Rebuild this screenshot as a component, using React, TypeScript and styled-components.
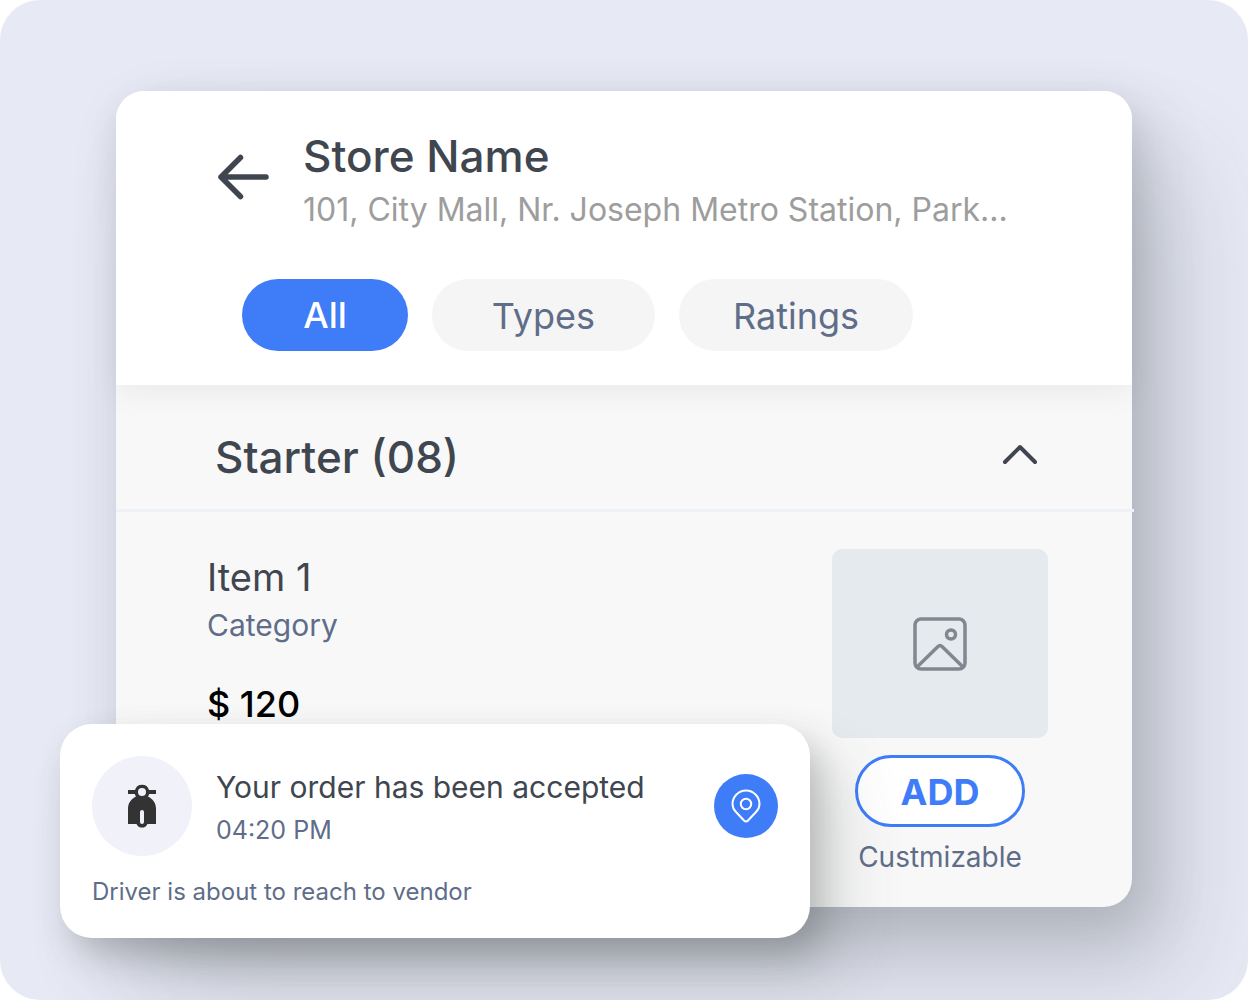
import React from "react";
import styled, { createGlobalStyle } from "styled-components";

const Global = createGlobalStyle`
  * { box-sizing: border-box; }
  body { margin: 0; background: #fff; font-family: Inter, "Liberation Sans", sans-serif; }
  button { font-family: inherit; border: 0; padding: 0; cursor: pointer; }
  h1, h2, h3, p { margin: 0; font-weight: 400; }
`;

const Stage = styled.main`
  padding: 91px 116px 93px;
  border-radius: 40px;
  background: #e7e9f5;
  overflow: hidden;
`;

const Card = styled.article`
  position: relative;
  border-radius: 28px;
  background: #f8f8f8;
  box-shadow:
    16px 24px 56px rgba(70, 76, 80, 0.22),
    52px 72px 100px rgba(70, 76, 80, 0.18);
`;

const Header = styled.header`
  padding: 39px 100px 34px;
  border-radius: 28px 28px 0 0;
  background: #fff;
  box-shadow: 0 8px 32px rgba(0, 0, 0, 0.06);
`;

const StoreRow = styled.div`
  display: flex;
  gap: 33px;
`;

const BackButton = styled.button`
  display: flex;
  align-items: center;
  justify-content: center;
  width: 54px;
  height: 94px;
  background: none;
  color: #40464f;
`;

const StoreName = styled.h1`
  font-size: 44px;
  line-height: 52px;
  font-weight: 500;
  color: #40464f;
`;

const Address = styled.p`
  font-size: 32px;
  line-height: 56px;
  color: #9d9d9d;
  white-space: nowrap;
`;

const Filters = styled.nav`
  display: flex;
  gap: 24px;
  margin: 41px 0 0 26px;
`;

const Pill = styled.button<{ $active?: boolean; $width: number }>`
  width: ${(p) => p.$width}px;
  height: 72px;
  padding-top: ${(p) => (p.$active ? 0 : 2)}px;
  border-radius: 36px;
  font-size: 36px;
  font-weight: ${(p) => (p.$active ? 500 : 400)};
  background: ${(p) => (p.$active ? "#3f7cf8" : "#f5f5f5")};
  color: ${(p) => (p.$active ? "#fff" : "#5f6d89")};
`;

const SectionHead = styled.div`
  display: flex;
  align-items: center;
  justify-content: space-between;
  height: 127px;
  margin-right: -2px;
  padding: 20px 96px 0 99px;
  border-bottom: 3px solid #eef1f5;
`;

const SectionTitle = styled.h2`
  font-size: 44px;
  line-height: 52px;
  font-weight: 500;
  color: #40464f;
`;

const IconButton = styled.button`
  display: flex;
  background: none;
  color: #40464f;
`;

const Item = styled.section`
  display: flex;
  justify-content: space-between;
  padding: 37px 84px 30px 91px;
`;

const ItemName = styled.h3`
  font-size: 38px;
  line-height: 56px;
  color: #40464f;
`;

const Category = styled.p`
  font-size: 30px;
  line-height: 40px;
  color: #5f6d89;
`;

const Price = styled.p`
  margin-top: 34px;
  font-size: 36px;
  line-height: 50px;
  font-weight: 500;
  color: #000;
`;

const ItemAside = styled.div`
  display: flex;
  flex-direction: column;
  align-items: center;
  width: 216px;
`;

const Thumb = styled.div`
  display: flex;
  align-items: center;
  justify-content: center;
  width: 100%;
  height: 189px;
  border-radius: 10px;
  background: #e5eaee;
`;

const AddButton = styled.button`
  width: 170px;
  height: 72px;
  margin-top: 17px;
  padding-top: 2px;
  border: 3px solid #3f7cf8;
  border-radius: 36px;
  background: #fff;
  color: #3f7cf8;
  font-size: 36px;
  font-weight: 700;
`;

const Note = styled.p`
  margin-top: 10px;
  font-size: 28px;
  line-height: 40px;
  color: #5f6d89;
`;

const Toast = styled.aside`
  position: absolute;
  left: -56px;
  bottom: -31px;
  width: 750px;
  padding: 32px 32px 30px;
  border-radius: 32px;
  background: #fff;
  box-shadow:
    10px 16px 32px rgba(70, 74, 74, 0.26),
    32px 40px 64px rgba(70, 74, 74, 0.16);
`;

const ToastRow = styled.div`
  display: flex;
  align-items: center;
`;

const Avatar = styled.div`
  display: flex;
  align-items: center;
  justify-content: center;
  width: 100px;
  height: 100px;
  border-radius: 50%;
  background: #f1f2f9;
`;

const ToastText = styled.div`
  flex: 1;
  padding: 4px 0 0 24px;
  white-space: nowrap;
`;

const ToastTitle = styled.p`
  font-size: 30px;
  line-height: 44px;
  color: #40464f;
`;

const Time = styled.p`
  font-size: 25px;
  line-height: 42px;
  color: #5f6d89;
`;

const LocateButton = styled.button`
  display: flex;
  align-items: center;
  justify-content: center;
  width: 64px;
  height: 64px;
  border-radius: 50%;
  background: #3f7cf8;
`;

const Status = styled.p`
  margin-top: 20px;
  font-size: 24px;
  line-height: 32px;
  color: #5f6d89;
`;

const ArrowIcon = () => (
  <svg width="54" height="48" viewBox="0 0 54 48" fill="none" stroke="currentColor" strokeWidth="5.5" strokeLinecap="round" strokeLinejoin="round">
    <path d="M50 24H5M24.500 4.500 5 24 24.500 43.500" />
  </svg>
);

const ChevronIcon = () => (
  <svg width="36" height="26" viewBox="0 0 36 26" fill="none" stroke="currentColor" strokeWidth="4" strokeLinecap="round" strokeLinejoin="round">
    <path d="M3 18 18 3 33 18" />
  </svg>
);

const ImageIcon = () => (
  <svg width="54" height="54" viewBox="0 0 54 54" fill="none" stroke="#82868f" strokeWidth="3.500" strokeLinejoin="round">
    <rect x="2" y="2" width="50" height="50" rx="6" />
    <circle cx="38" cy="17.500" r="4.500" />
    <path d="M4 50 25 29.500Q27 27.500 29 29.500L50 50" />
  </svg>
);

const ScooterIcon = () => (
  <svg width="28" height="44" viewBox="0 0 28 44" fill="#333">
    <path
      fillRule="evenodd"
      d="M0 6H7A7.300 7.300 0 0 1 21 6H28V10H21.200A7 7 0 0 1 20 12.500C25 15 28 19 28 25V40H19.500A6 6 0 0 1 8.500 40H0V25C0 19 3 15 8 12.500A7 7 0 0 1 6.800 10H0ZM14 4A4 4 0 1 0 14 12A4 4 0 1 0 14 4ZM12 28V38A2 2 0 0 0 16 38V28A2 2 0 0 0 12 28Z"
    />
  </svg>
);

const PinIcon = () => (
  <svg width="30" height="34" viewBox="0 0 30 34" fill="none" stroke="#fff" strokeWidth="2" strokeLinejoin="round">
    <path d="M17 31.500 25 23C27.500 20.500 28.500 18 28.500 15A13.500 13.500 0 0 0 1.500 15C1.500 18 2.500 20.500 5 23L13 31.500Q15 33.500 17 31.500Z" />
    <circle cx="15" cy="15" r="5.200" />
  </svg>
);

export default function App() {
  return (
    <>
      <Global />
      <Stage>
        <Card>
          <Header>
            <StoreRow>
              <BackButton aria-label="Back">
                <ArrowIcon />
              </BackButton>
              <div>
                <StoreName>Store Name</StoreName>
                <Address>101, City Mall, Nr. Joseph Metro Station, Park...</Address>
              </div>
            </StoreRow>
            <Filters>
              <Pill $active $width={166}>All</Pill>
              <Pill $width={223}>Types</Pill>
              <Pill $width={234}>Ratings</Pill>
            </Filters>
          </Header>
          <SectionHead>
            <SectionTitle>Starter (08)</SectionTitle>
            <IconButton aria-label="Collapse Starter">
              <ChevronIcon />
            </IconButton>
          </SectionHead>
          <Item>
            <div>
              <ItemName>Item 1</ItemName>
              <Category>Category</Category>
              <Price>$ 120</Price>
            </div>
            <ItemAside>
              <Thumb>
                <ImageIcon />
              </Thumb>
              <AddButton>ADD</AddButton>
              <Note>Custmizable</Note>
            </ItemAside>
          </Item>
          <Toast role="status">
            <ToastRow>
              <Avatar>
                <ScooterIcon />
              </Avatar>
              <ToastText>
                <ToastTitle>Your order has been accepted</ToastTitle>
                <Time>04:20 PM</Time>
              </ToastText>
              <LocateButton aria-label="Track order">
                <PinIcon />
              </LocateButton>
            </ToastRow>
            <Status>Driver is about to reach to vendor</Status>
          </Toast>
        </Card>
      </Stage>
    </>
  );
}
